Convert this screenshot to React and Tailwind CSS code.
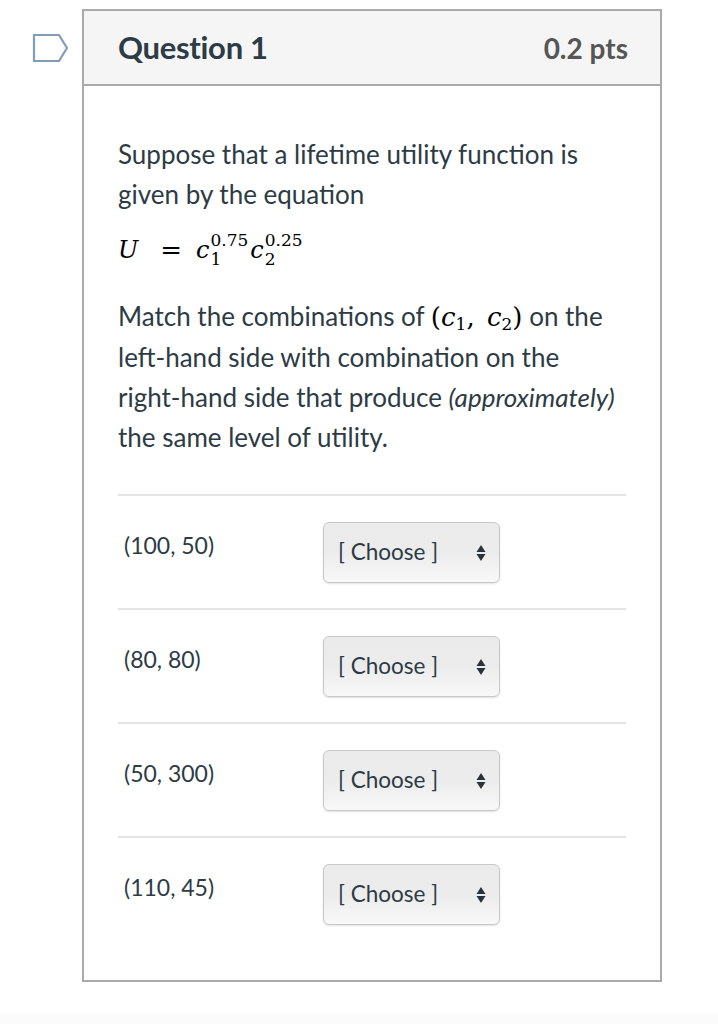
import React from "react";

const rows = ["(100, 50)", "(80, 80)", "(50, 300)", "(110, 45)"];

function Flag() {
  return (
    <svg width="40" height="32" viewBox="0 0 40 32" className="block">
      <path d="M2 2 H27 L35 15 L27 28 H2 Z" fill="none" stroke="#7f9db8" strokeWidth="2.2" strokeLinejoin="round" />
    </svg>
  );
}

function Arrows() {
  return (
    <svg width="10" height="18" viewBox="0 0 10 18" className="block">
      <path d="M5 1 L9.5 8 H0.5 Z" fill="#2a333b" />
      <path d="M5 17 L9.5 10 H0.5 Z" fill="#2a333b" />
    </svg>
  );
}

function Select() {
  return (
    <div className="w-[177px] h-[61px] rounded-[6px] border border-[#c8c8c8] bg-gradient-to-b from-[#ebebeb] via-[#ececec] to-[#f8f8f8] shadow-[0_1px_2px_rgba(0,0,0,0.12)] flex items-center justify-between pl-[14px] pr-[13px]">
      <span className="text-[22.5px] text-[#2d3b45] leading-none">[ Choose ]</span>
      <Arrows />
    </div>
  );
}

const math = { fontFamily: '"DejaVu Serif", "Liberation Serif", serif' };

function Power({ sup, sub }) {
  return (
    <span className="inline-flex flex-col text-[17px] leading-[19px] pl-[1px] pr-[2px] mt-[-1px]">
      <span>{sup}</span>
      <span>{sub}</span>
    </span>
  );
}

export default function App() {
  return (
    <div className="w-[718px] h-[1024px] bg-white flex flex-col" style={{ fontFamily: 'Lato, "Noto Sans", sans-serif' }}>
      <div className="flex flex-1 pt-[9px]">
        <div className="w-[82px] pl-[32px] pt-[24px]">
          <Flag />
        </div>
        <div className="w-[580px] h-[973px] border-2 border-[#aaaaaa] flex flex-col">
          <div className="h-[75px] bg-[#f5f5f5] border-b-2 border-[#aaaaaa] flex items-center justify-between pl-[34px] pr-[32px]">
            <span className="text-[31px] font-bold text-[#2d3b45] tracking-[-0.3px]">Question 1</span>
            <span className="text-[28px] font-bold text-[#565656]">0.2 pts</span>
          </div>
          <div className="pl-[34px] pr-[20px] pt-[48px] text-[26px] leading-[40px] text-[#2d3b45] whitespace-nowrap">
            <p>
              Suppose that a lifetime utility function is
              <br />
              given by the equation
            </p>
            <p className="mt-[16px] h-[40px] flex items-center text-[24px] text-black" style={math}>
              <span className="italic">U</span>
              <span className="ml-[22px] mr-[14px] text-[26px]">=</span>
              <span className="italic">c</span>
              <Power sup="0.75" sub="1" />
              <span className="italic">c</span>
              <Power sup="0.25" sub="2" />
            </p>
            <p className="mt-[26px]">
              Match the combinations of{" "}
              <span className="text-[26px] text-black" style={math}>
                (<span className="italic">c</span>
                <sub className="text-[17px] not-italic">1</sub>,{" "}
                <span className="italic ml-[4px]">c</span>
                <sub className="text-[17px]">2</sub>)
              </span>{" "}
              on the
              <br />
              left-hand side with combination on the
              <br />
              right-hand side that produce <em>(approximately)</em>
              <br />
              the same level of utility.
            </p>
            <div className="mt-[37px] mr-[14px] whitespace-normal">
              {rows.map((r) => (
                <div key={r} className="border-t-2 border-[#e5e5e5] flex h-[114px] pt-[26px]">
                  <div className="w-[205px] pl-[6px] pt-[9px] text-[23px] leading-[28px] text-[#2d3b45]">{r}</div>
                  <Select />
                </div>
              ))}
            </div>
          </div>
        </div>
      </div>
      <div className="h-[10px] bg-[#fbfbfb]" />
    </div>
  );
}
